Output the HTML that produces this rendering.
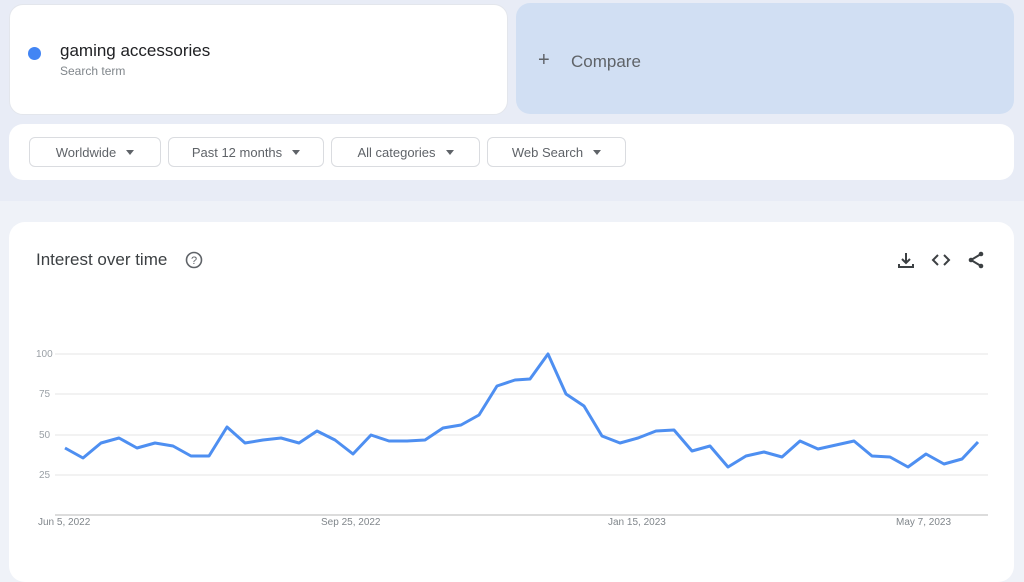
<!DOCTYPE html>
<html><head><meta charset="utf-8"><style>
*{margin:0;padding:0;box-sizing:border-box}
body{width:1024px;height:570px;overflow:hidden;background:#eff2f8;font-family:"Liberation Sans",Arial,sans-serif;position:relative}
.top{position:absolute;left:0;top:0;width:1024px;height:201px;background:#e8ecf6}
.card{position:absolute;background:#fff;border-radius:14px}
.btn{position:absolute;top:137px;height:30px;border:1px solid #dadce0;border-radius:6px;font-size:13px;color:#5f6368;display:flex;align-items:center;justify-content:center;gap:10px;background:#fff}
.tri{width:0;height:0;border-left:4px solid transparent;border-right:4px solid transparent;border-top:5px solid #5f6368}
.yl{position:absolute;font-size:10px;color:#9aa0a6;left:36px}
.xl{position:absolute;font-size:10px;color:#80868b;top:517px}
</style></head><body>
<div class="top"></div>
<div class="card" style="left:9px;top:4px;width:499px;height:111px;border:1px solid #e3e6ec"></div>
<div style="position:absolute;left:28px;top:47px;width:13px;height:13px;border-radius:50%;background:#4285f4"></div>
<div style="position:absolute;left:60px;top:41px;font-size:17px;color:#202124">gaming accessories</div>
<div style="position:absolute;left:60px;top:64px;font-size:12px;color:#80868b">Search term</div>
<div style="position:absolute;left:516px;top:3px;width:498px;height:111px;background:#d1dff3;border-radius:14px"></div>
<div style="position:absolute;left:538px;top:49px;font-size:20px;color:#5f6368">+</div>
<div style="position:absolute;left:571px;top:52px;font-size:17px;color:#5f6368">Compare</div>
<div class="card" style="left:9px;top:124px;width:1005px;height:56px"></div>
<div class="btn" style="left:29px;width:132px">Worldwide <span class="tri"></span></div>
<div class="btn" style="left:168px;width:156px">Past 12 months <span class="tri"></span></div>
<div class="btn" style="left:331px;width:149px">All categories <span class="tri"></span></div>
<div class="btn" style="left:487px;width:139px">Web Search <span class="tri"></span></div>
<div class="card" style="left:9px;top:222px;width:1005px;height:360px;border-radius:16px"></div>
<div style="position:absolute;left:36px;top:250px;font-size:17px;color:#3c4043">Interest over time</div>
<svg style="position:absolute;left:184px;top:250px" width="20" height="20" viewBox="0 0 20 20"><circle cx="10" cy="10" r="7.5" fill="none" stroke="#5f6368" stroke-width="1.6"/><text x="10" y="14" font-size="11" text-anchor="middle" fill="#5f6368" font-family="Liberation Sans">?</text></svg>
<svg style="position:absolute;left:896px;top:250px" width="92" height="20" viewBox="0 0 92 20">
<g stroke="#3c4043" stroke-width="2" fill="none"><path d="M10 3v10M6 9l4 4 4-4M3 14v3h14v-3"/>
<path d="M42 5l-5 5 5 5M48 5l5 5-5 5"/>
<path d="M85 4l-10 6 10 6"/></g>
<g fill="#3c4043"><circle cx="85" cy="4" r="2.3"/><circle cx="75" cy="10" r="2.3"/><circle cx="85" cy="16" r="2.3"/></g></svg>
<svg style="position:absolute;left:0;top:0" width="1024" height="570">
<g stroke="#e6e6e6" stroke-width="1"><line x1="55" y1="354" x2="988" y2="354"/><line x1="55" y1="394" x2="988" y2="394"/><line x1="55" y1="435" x2="988" y2="435"/><line x1="55" y1="475" x2="988" y2="475"/></g>
<line x1="55" y1="515" x2="988" y2="515" stroke="#d0d0d0" stroke-width="1.5"/>
<polyline fill="none" stroke="#4e8ff1" stroke-width="3" stroke-linejoin="round" points="65,448 83,458 101,443 119,438 137,448 155,443 173,446 191,456 209,456 227,427 245,443 263,440 281,438 299,443 317,431 335,440 353,454 371,435 389,441 407,441 425,440 443,428 461,425 479,415 497,386 515,380 530,379 548,354 566,394 584,406 602,436 620,443 638,438 656,431 674,430 692,451 710,446 728,467 746,456 764,452 782,457 800,441 818,449 836,445 854,441 872,456 890,457 908,467 926,454 944,464 962,459 978,442"/>
</svg>
<div class="yl" style="top:349px">100</div>
<div class="yl" style="top:389px;left:39px">75</div>
<div class="yl" style="top:430px;left:39px">50</div>
<div class="yl" style="top:470px;left:39px">25</div>
<div class="xl" style="left:38px">Jun 5, 2022</div>
<div class="xl" style="left:321px">Sep 25, 2022</div>
<div class="xl" style="left:608px">Jan 15, 2023</div>
<div class="xl" style="left:896px">May 7, 2023</div>
</body></html>
